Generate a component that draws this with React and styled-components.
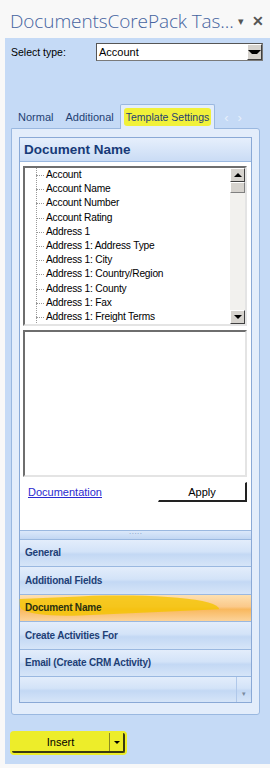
import React from "react";
import styled, { createGlobalStyle } from "styled-components";

const GlobalStyle = createGlobalStyle`
  html, body {
    margin: 0;
    padding: 0;
    background: #f8f8f8;
  }
  * { box-sizing: border-box; }
`;

const fields = [
  "Account",
  "Account Name",
  "Account Number",
  "Account Rating",
  "Address 1",
  "Address 1: Address Type",
  "Address 1: City",
  "Address 1: Country/Region",
  "Address 1: County",
  "Address 1: Fax",
  "Address 1: Freight Terms",
];

const sections = [
  { label: "General" },
  { label: "Additional Fields" },
  { label: "Document Name", active: true },
  { label: "Create Activities For" },
  { label: "Email (Create CRM Activity)" },
];

export default function App() {
  return (
    <>
      <GlobalStyle />
      <Pane>
        <TitleBar>
          <Title>DocumentsCorePack Tas...</Title>
          <Controls>
            <span className="menu">▾</span>
            <span className="close">✕</span>
          </Controls>
        </TitleBar>

        <Body>
          <SelectRow>
            <Label>Select type:</Label>
            <Select>
              <span>Account</span>
              <DropButton>
                <Arrow />
              </DropButton>
            </Select>
          </SelectRow>

          <TabStrip>
            <Tab>Normal</Tab>
            <Tab>Additional</Tab>
            <Tab selected>
              <Marker>Template Settings</Marker>
            </Tab>
            <Scroller>
              <span>‹</span>
              <span>›</span>
            </Scroller>
          </TabStrip>

          <TabPanel>
            <Card>
              <CardHeader>Document Name</CardHeader>
              <CardContent>
                <ListBox>
                  <Tree>
                    {fields.map((f) => (
                      <TreeItem key={f}>{f}</TreeItem>
                    ))}
                  </Tree>
                  <ScrollBar>
                    <ScrollButton>
                      <Arrow up />
                    </ScrollButton>
                    <Thumb />
                    <Track />
                    <ScrollButton>
                      <Arrow />
                    </ScrollButton>
                  </ScrollBar>
                </ListBox>
                <TextArea />
                <ActionRow>
                  <DocLink href="#">Documentation</DocLink>
                  <ApplyButton>Apply</ApplyButton>
                </ActionRow>
              </CardContent>
              <Splitter>·····</Splitter>
              {sections.map((s) => (
                <NavItem key={s.label} active={s.active}>
                  {s.active && <Highlight />}
                  <span>{s.label}</span>
                </NavItem>
              ))}
              <NavOverflow>
                <OverflowButton>▾</OverflowButton>
              </NavOverflow>
            </Card>
          </TabPanel>

          <InsertWrap>
            <InsertButton>
              <span className="label">Insert</span>
              <span className="split">
                <Arrow small />
              </span>
            </InsertButton>
          </InsertWrap>
        </Body>
      </Pane>
    </>
  );
}

const Pane = styled.div`
  width: 270px;
  height: 768px;
  display: flex;
  flex-direction: column;
  font-family: "Liberation Sans", Arial, sans-serif;
  font-size: 11px;
`;

const TitleBar = styled.div`
  height: 38px;
  display: flex;
  align-items: center;
  padding: 4px 0 0 10px;
`;

const Title = styled.div`
  font-family: "Open Sans", "Noto Sans", sans-serif;
  font-weight: 300;
  font-size: 19px;
  color: #4664a0;
  letter-spacing: -0.1px;
  white-space: nowrap;
`;

const Controls = styled.div`
  margin-left: auto;
  display: flex;
  align-items: center;
  gap: 8px;
  padding-right: 6px;
  color: #555;
  .menu { font-size: 11px; }
  .close { font-size: 14px; font-weight: bold; }
`;

const Body = styled.div`
  margin-left: 5px;
  height: 726px;
  background: #c5daf6;
  display: flex;
  flex-direction: column;
  padding: 5px 10px 0 6px;
`;

const SelectRow = styled.div`
  display: flex;
  align-items: center;
  height: 18px;
`;

const Label = styled.div`
  width: 85px;
  color: #000;
  font-size: 10.5px;
`;

const Select = styled.div`
  flex: 1;
  height: 18px;
  margin-right: -3px;
  background: #fff;
  border: 1px solid #7a7a7a;
  border-top-color: #555;
  border-left-color: #555;
  display: flex;
  align-items: center;
  padding-left: 2px;
  color: #000;
  font-size: 11px;
  span { flex: 1; }
`;

const DropButton = styled.div`
  width: 15px;
  height: 16px;
  background: #d6d3ce;
  border: 1px solid;
  border-color: #fff #404040 #404040 #fff;
  display: flex;
  align-items: center;
  justify-content: center;
`;

const Arrow = styled.span`
  width: 0;
  height: 0;
  border-left: ${(p) => (p.small ? 3 : 4)}px solid transparent;
  border-right: ${(p) => (p.small ? 3 : 4)}px solid transparent;
  ${(p) =>
    p.up
      ? `border-bottom: 4px solid #000;`
      : `border-top: ${p.small ? 3 : 4}px solid #000;`}
`;

const TabStrip = styled.div`
  margin-top: 43px;
  height: 24px;
  display: flex;
  align-items: flex-end;
  padding-left: 1px;
  position: relative;
  z-index: 1;
`;

const Tab = styled.div`
  height: 22px;
  display: flex;
  align-items: center;
  padding: 0 ${(p) => (p.selected ? 3 : 6)}px;
  color: #1f3f73;
  font-size: 11px;
  white-space: nowrap;
  ${(p) =>
    p.selected &&
    `
    margin-left: 0;
    background: #e3edfb;
    border: 1px solid #9ab8e0;
    border-bottom: none;
    border-radius: 2px 2px 0 0;
    margin-bottom: -1px;
    height: 25px;
  `}
`;

const Marker = styled.span`
  background: #f1f13a;
  padding: 3px 2px;
  border-radius: 3px;
  font-size: 10.5px;
  color: #1f3f73;
`;

const Scroller = styled.div`
  display: flex;
  gap: 9px;
  margin-left: 9px;
  height: 22px;
  align-items: center;
  color: #e8f0fb;
  font-size: 13px;
`;

const TabPanel = styled.div`
  height: 587px;
  background: #e3edfb;
  border: 1px solid #9ab8e0;
  border-radius: 0 3px 3px 3px;
  padding: 8px 7px 11px 7px;
  display: flex;
`;

const Card = styled.div`
  flex: 1;
  border: 1px solid #8aa9d6;
  background: #fff;
  display: flex;
  flex-direction: column;
`;

const CardHeader = styled.div`
  height: 24px;
  display: flex;
  align-items: center;
  padding-left: 4px;
  font-weight: bold;
  font-size: 13.5px;
  color: #173a78;
  background: linear-gradient(#e6effc, #cadcf5);
  border-bottom: 1px solid #9ab8e0;
`;

const CardContent = styled.div`
  flex: 1;
  padding: 4px 4px 0 3px;
  display: flex;
  flex-direction: column;
`;

const ListBox = styled.div`
  height: 160px;
  display: flex;
  background: #fff;
  border: 2px solid;
  border-color: #6e6e6e #e4e4e4 #e4e4e4 #6e6e6e;
`;

const Tree = styled.div`
  flex: 1;
  padding: 0 0 0 11px;
  background-image: linear-gradient(#999 50%, transparent 50%);
  background-size: 1px 2px;
  background-repeat: repeat-y;
  background-position: 11px 0;
`;

const TreeItem = styled.div`
  height: 14.2px;
  line-height: 14.2px;
  color: #000;
  font-size: 10.2px;
  letter-spacing: -0.2px;
  padding-left: 10px;
  position: relative;
  white-space: nowrap;
  &::before {
    content: "";
    position: absolute;
    left: 0;
    top: 7px;
    width: 8px;
    border-top: 1px dotted #999;
  }
`;

const ScrollBar = styled.div`
  width: 15px;
  display: flex;
  flex-direction: column;
  background: #f2f1ee;
`;

const ScrollButton = styled.div`
  height: 14px;
  background: #d6d3ce;
  border: 1px solid;
  border-color: #fff #404040 #404040 #fff;
  display: flex;
  align-items: center;
  justify-content: center;
`;

const Thumb = styled.div`
  height: 11px;
  background: #d6d3ce;
  border: 1px solid;
  border-color: #fff #808080 #808080 #fff;
`;

const Track = styled.div`
  flex: 1;
`;

const TextArea = styled.div`
  margin-top: 4px;
  height: 147px;
  background: #fff;
  border: 2px solid;
  border-color: #6e6e6e #e4e4e4 #e4e4e4 #6e6e6e;
`;

const ActionRow = styled.div`
  display: flex;
  align-items: center;
  margin-top: 5px;
  padding-left: 5px;
`;

const DocLink = styled.a`
  color: #2a2ad0;
  text-decoration: underline;
  font-size: 11px;
`;

const ApplyButton = styled.button`
  margin-left: auto;
  width: 89px;
  height: 20px;
  background: #fff;
  border: 1px solid;
  border-width: 1px 2px 2px 1px;
  border-color: #fff #222 #222 #fff;
  font-family: "Liberation Sans", Arial, sans-serif;
  font-size: 11px;
  color: #000;
  padding: 0;
`;

const Splitter = styled.div`
  height: 9px;
  background: linear-gradient(#dbe8fa, #c2d7f3);
  border-top: 1px solid #9ab8e0;
  text-align: center;
  font-size: 8px;
  line-height: 6px;
  color: #7c98c2;
`;

const NavItem = styled.div`
  height: 27.5px;
  display: flex;
  align-items: center;
  padding-left: 5px;
  position: relative;
  font-weight: bold;
  font-size: 10px;
  letter-spacing: -0.2px;
  color: ${(p) => (p.active ? "#2a3010" : "#1e3f76")};
  border-top: 1px solid #9ab8e0;
  background: ${(p) =>
    p.active
      ? "linear-gradient(#fde0b0 0%, #fbc98a 45%, #f9b85e 55%, #fcd39a 100%)"
      : "linear-gradient(#e3edfb 0%, #d3e3f8 45%, #c3d8f4 55%, #d6e5f8 100%)"};
  span { position: relative; }
`;

const Highlight = styled.div`
  position: absolute;
  left: 0;
  top: 4px;
  width: 199px;
  height: 19px;
  background: #f4c400;
  opacity: 0.8;
  border-radius: 0 70% 0 30% / 0 100% 0 60%;
  transform: rotate(-2.5deg);
  transform-origin: left center;
`;

const NavOverflow = styled.div`
  height: 26px;
  display: flex;
  justify-content: flex-end;
  border-top: 1px solid #9ab8e0;
  background: linear-gradient(#e3edfb 0%, #d3e3f8 45%, #c3d8f4 55%, #d6e5f8 100%);
`;

const OverflowButton = styled.div`
  width: 15px;
  border-left: 1px solid #b0c8ea;
  display: flex;
  align-items: flex-end;
  justify-content: center;
  padding-bottom: 4px;
  font-size: 7px;
  color: #7a8aa0;
`;

const InsertWrap = styled.div`
  margin-top: 18px;
  padding-left: 1px;
`;

const InsertButton = styled.div`
  width: 113px;
  height: 20px;
  display: flex;
  background: #eded2a;
  border: 1px solid;
  border-width: 0 2px 2px 0;
  border-color: #3a3a10;
  box-shadow: 0 0 0 2px #eded2a;
  border-radius: 2px;
  .label {
    flex: 1;
    display: flex;
    align-items: center;
    justify-content: center;
    color: #000;
    font-size: 11px;
  }
  .split {
    width: 14px;
    border-left: 1px solid #8a8a20;
    display: flex;
    align-items: center;
    justify-content: center;
  }
`;
